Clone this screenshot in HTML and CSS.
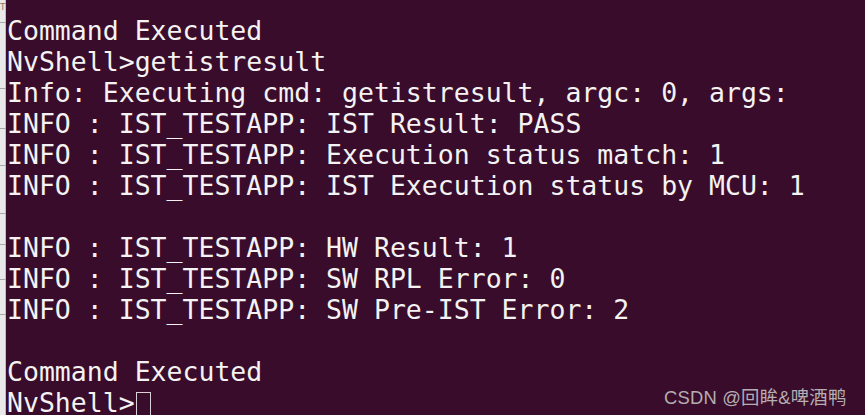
FILE: index.html
```html
<!DOCTYPE html>
<html>
<head>
<meta charset="utf-8">
<link rel="stylesheet" href="styles.css">
</head>
<body>
<div class="screen">
  <div class="strip">
    <span class="tick t1">T</span>
    <span class="rule r1"></span>
    <span class="rule r2"></span>
    <span class="rule r3"></span>
    <span class="rule r4"></span>
    <span class="rule r5"></span>
    <span class="rule r6"></span>
    <span class="rule r7"></span>
    <span class="rule r8"></span>
  </div>
  <div class="term">
    <div class="line">Command Executed</div>
    <div class="line">NvShell&gt;getistresult</div>
    <div class="line">Info: Executing cmd: getistresult, argc: 0, args:</div>
    <div class="line">INFO : IST_TESTAPP: IST Result: PASS</div>
    <div class="line">INFO : IST_TESTAPP: Execution status match: 1</div>
    <div class="line">INFO : IST_TESTAPP: IST Execution status by MCU: 1</div>
    <div class="line blank"></div>
    <div class="line">INFO : IST_TESTAPP: HW Result: 1</div>
    <div class="line">INFO : IST_TESTAPP: SW RPL Error: 0</div>
    <div class="line">INFO : IST_TESTAPP: SW Pre-IST Error: 2</div>
    <div class="line blank"></div>
    <div class="line">Command Executed</div>
    <div class="line">NvShell&gt;<span class="cursor"></span></div>
  </div>
  <div class="watermark">CSDN @回眸&amp;啤酒鸭</div>
</div>
</body>
</html>
```
FILE: styles.css
```css
html, body {
  margin: 0;
  padding: 0;
  background: #380c2a;
  overflow: hidden;
}
.screen {
  position: relative;
  width: 865px;
  height: 415px;
  display: flex;
  align-items: flex-start;
  background: #380c2a;
  overflow: hidden;
}
.strip {
  position: relative;
  width: 6px;
  height: 415px;
  flex: none;
  background: #e9e9e9;
  border-right: 1px solid #bdbdbd;
  box-sizing: border-box;
}
.tick {
  position: absolute;
  left: 0;
  top: 2px;
  font: 9px "DejaVu Sans", sans-serif;
  color: #8a7a5a;
}
.rule {
  position: absolute;
  left: 0;
  width: 6px;
  height: 1px;
  background: #a9a9a9;
}
.r1 { top: 22px; }
.r2 { top: 88px; }
.r3 { top: 128px; }
.r4 { top: 165px; }
.r5 { top: 213px; }
.r6 { top: 244px; }
.r7 { top: 279px; }
.r8 { top: 314px; }
.term {
  display: flex;
  flex-direction: column;
  padding: 15px 0 0 1px;
  font-family: "DejaVu Sans Mono", monospace;
  font-size: 26.5px;
  line-height: 31px;
  color: #f4f2f2;
}
.line {
  white-space: pre;
  height: 31px;
}
.cursor {
  display: inline-block;
  width: 15px;
  height: 25px;
  border: 1.5px solid #d9d2d6;
  box-sizing: border-box;
  vertical-align: -5px;
  margin-left: 1px;
}
.watermark {
  position: absolute;
  left: 664px;
  top: 383px;
  font-family: "Liberation Sans", "Noto Sans CJK SC", sans-serif;
  font-size: 18.4px;
  color: #b5aeb2;
  letter-spacing: 0.2px;
}
```
